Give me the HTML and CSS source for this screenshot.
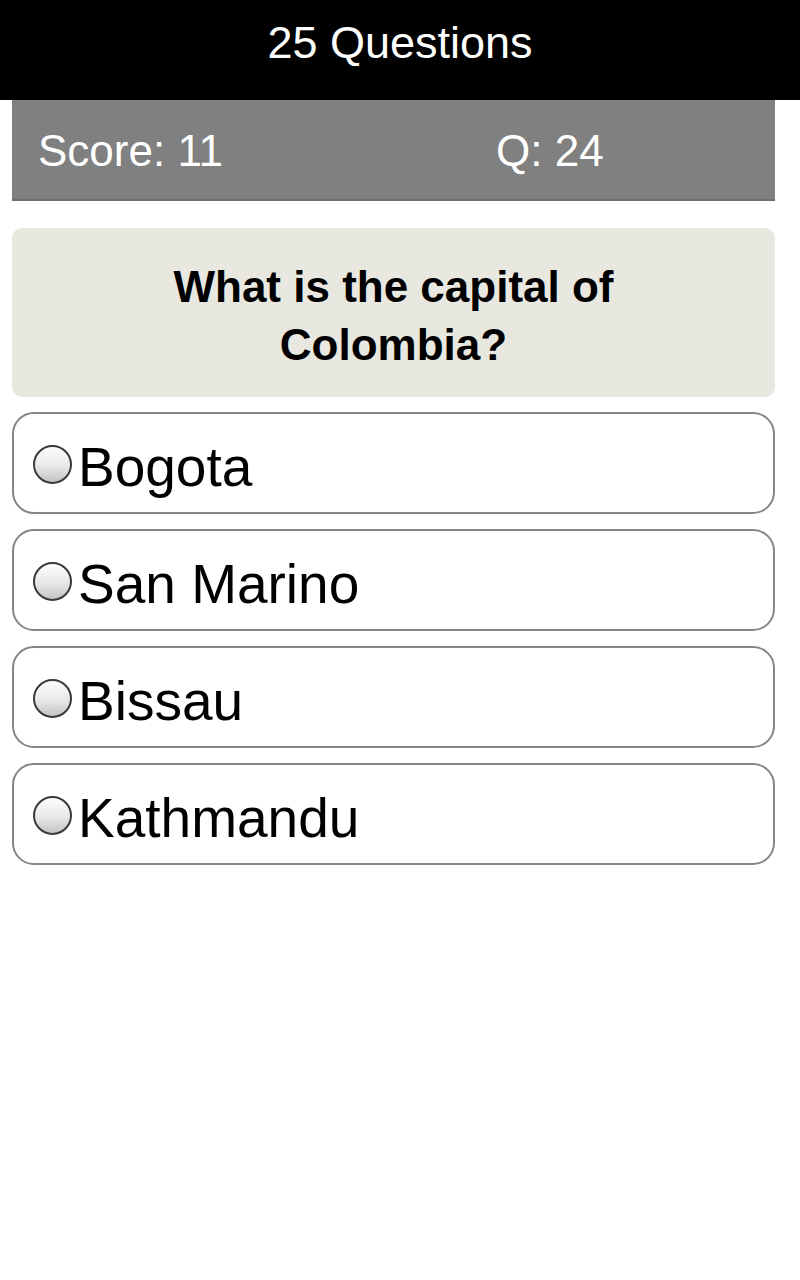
FILE: index.html
```html
<!DOCTYPE html>
<html lang="en">
<head>
    <meta charset="UTF-8">
    <meta name="viewport" content="width=device-width, initial-scale=1.0">
    <title>25 Questions</title>
    <link rel="stylesheet" href="styles.css">
</head>
<body>
    <div class="header">25 Questions</div>
    <div class="container">
        <div class="status">
            <span class="score">Score: 11</span>
            <span class="qnum">Q: 24</span>
        </div>
        <div class="question">What is the capital of Colombia?</div>
        <form class="answers">
            <label class="answer"><input type="radio" name="answer" value="Bogota">Bogota</label>
            <label class="answer"><input type="radio" name="answer" value="San Marino">San Marino</label>
            <label class="answer"><input type="radio" name="answer" value="Bissau">Bissau</label>
            <label class="answer"><input type="radio" name="answer" value="Kathmandu">Kathmandu</label>
        </form>
    </div>
</body>
</html>
```

FILE: styles.css
```css
body {
    font-family: "Liberation Sans", Arial, Helvetica, sans-serif;
    margin: 0;
    padding: 0;
    background: #fff;
}
.header {
    background-color: #000;
    color: #fff;
    height: 100px;
    line-height: 85px;
    font-size: 45px;
    text-align: center;
}
.container {
    padding: 0 25px 0 12px;
}
.status {
    display: grid;
    grid-template-columns: 458px 1fr;
    background-color: #808080;
    color: #fff;
    font-size: 44px;
    height: 96px;
    line-height: 96px;
    padding: 3px 0 0 26px;
    border-bottom: 2px solid #6e6e6e;
}
.question {
    margin-top: 27px;
    background-color: #e8e8e0;
    border-radius: 10px;
    padding: 30px 130px 23px;
    font-size: 44px;
    font-weight: bold;
    line-height: 58px;
    text-align: center;
}
.answers {
    margin: 15px 0 0;
    display: flex;
    flex-direction: column;
    gap: 15px;
}
.answer {
    display: flex;
    align-items: center;
    height: 90px;
    padding: 8px 0 0 19px;
    line-height: 88px;
    border: 2px solid #858585;
    border-radius: 22px;
    font-size: 55px;
    color: #000;
}
.answer input[type="radio"] {
    -webkit-appearance: none;
    appearance: none;
    width: 39px;
    height: 39px;
    margin: -6px 6px 0 0;
    border: 2px solid #3a3a3a;
    border-radius: 50%;
    background: linear-gradient(#fdfdfd, #e8e8e8 55%, #c4c4c4);
    box-sizing: border-box;
    flex-shrink: 0;
}
```
